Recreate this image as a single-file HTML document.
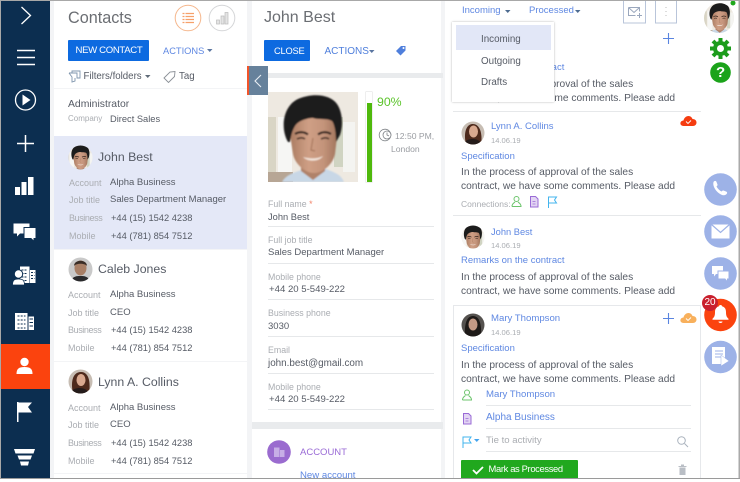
<!DOCTYPE html>
<html><head><meta charset="utf-8"><style>
html,body{margin:0;padding:0}
body{width:740px;height:479px;overflow:hidden;position:relative;background:#fff;font-family:"Liberation Sans",sans-serif;color:#565b65;font-size:9.5px}
i{font-style:normal;position:absolute;white-space:nowrap;line-height:12px;transform:translateY(1px)}
.b{position:absolute}
.l{color:#aaadb2;font-size:9px}
.bz{letter-spacing:-.4px}
.n{font-size:12.300px;color:#565b65}
.a{color:#5f88e2;font-size:9.500px}
.f{color:#aaadb2;font-size:8.800px}
.p{font-size:9.300px}
.m{font-size:10.200px}
.d{font-size:7.600px;color:#aaadb2}
.ln{position:absolute;height:1px;background:#e6e8ea}
svg{position:absolute;overflow:hidden}
</style></head><body>
<div class="b" style="left:50px;top:0;width:690px;height:479px;background:#f3f4f6"></div>
<div class="b" style="left:54px;top:0;width:193px;height:88px;background:#fff"></div>
<div class="b" style="left:54px;top:89px;width:193px;height:47px;background:#fff"></div>
<div class="b" style="left:54px;top:136px;width:193px;height:113px;background:#e4e8f7"></div>
<div class="b" style="left:54px;top:250px;width:193px;height:111px;background:#fff"></div>
<div class="b" style="left:54px;top:362px;width:193px;height:111px;background:#fff"></div>
<div class="b" style="left:54px;top:474px;width:193px;height:5px;background:#fff"></div>
<div class="b" style="left:252px;top:0;width:189px;height:73px;background:#fff"></div>
<div class="b" style="left:252px;top:73px;width:191px;height:5px;background:#e9ebed"></div>
<div class="b" style="left:252px;top:78px;width:189px;height:344px;background:#fff"></div>
<div class="b" style="left:252px;top:422px;width:191px;height:7px;background:#e9ebed"></div>
<div class="b" style="left:252px;top:429px;width:189px;height:50px;background:#fff"></div>
<div class="b" style="left:445px;top:0;width:295px;height:479px;background:#fff"></div>

<!-- sidebar -->
<div class="b" style="left:1px;top:0;width:49px;height:479px;background:#0c2e50"></div>
<div class="b" style="left:1px;top:344px;width:49px;height:45px;background:#fb430e"></div>
<svg style="left:0;top:0" width="50" height="479" fill="#fff">
<path d="M21.500 7l9 8.500-9 8.500" fill="none" stroke="#fff" stroke-width="1.300"/>
<path d="M17 50.500h18M17 57.500h18M17 64.500h18" stroke="#fff" stroke-width="1.600"/>
<circle cx="25.500" cy="100" r="10" fill="none" stroke="#fff" stroke-width="1.300"/><path d="M22.500 94.500l8 5.500-8 5.500z"/>
<path d="M25.500 135v17M17 143.500h17" stroke="#fff" stroke-width="1.500"/>
<path d="M15 187h5v8h-5zM21.500 182h5v13h-5zM28 177h5.500v18H28z"/>
<path d="M13.500 223.500h16v10h-9.500l-3 3v-3h-3.500z"/><path d="M24 227.500h12v11h-2v3l-3-3H24z" stroke="#0c2e50"/>
<path d="M20 268v-1.500h9.500V283H20zM30 270h5.500v13H30z"/>
<path d="M21.500 270h6M21.500 273.500h6M21.500 277h6M21.500 280.500h6M31 272.500h3.500M31 275.500h3.500M31 278.500h3.500" stroke="#0c2e50" stroke-dasharray="2 1"/>
<circle cx="18.500" cy="274" r="4.200" stroke="#0c2e50"/><path d="M12.500 285c0-5.500 2.500-6 6-6s6 .5 6 6z" stroke="#0c2e50" stroke-width=".8"/>
<path d="M15 313h12.500v17H15zM28.500 316.500h5.500V330h-5.500z"/><path d="M17.500 316h8M17.500 320h8M17.500 324h8M17.500 328h8" stroke="#0c2e50" stroke-dasharray="2 1.200"/><path d="M29.500 319h3.500M29.500 322.500h3.500M29.500 326h3.500" stroke="#0c2e50"/>
<circle cx="24.500" cy="362" r="4.200"/><path d="M16.500 374c0-5.500 2.500-7 8-7s8 1.500 8 7z"/>
<path d="M17 402h1.500v20H17zM18.500 402.500H32l-4 4.500 4 5.500H18.500z"/>
<path d="M14 449h21l-1.500 4.500h-18zM17.500 455.500h14.500l-1.500 4h-11.500zM20 461.500h9l-1 4h-7z"/>
</svg>

<!-- contacts column -->
<i style="left:68px;top:9px;font-size:16.200px;line-height:16px;color:#6b6e73">Contacts</i>
<svg style="left:172px;top:3px" width="66" height="30">
<circle cx="16" cy="15" r="12.800" fill="#fff" stroke="#f5b78d" stroke-width="1"/>
<path d="M10.500 10.500h2M13.500 10.500h8.500M10.500 13.500h2M13.500 13.500h8.500M10.500 16.500h2M13.500 16.500h8.500M10.500 19.500h2M13.500 19.500h8.500" stroke="#f6a06a" stroke-width="1.300"/>
<circle cx="50" cy="15" r="12.800" fill="#fff" stroke="#d5d6d8" stroke-width="1"/>
<path d="M44.500 17h3v4h-3zM49 13h3v8h-3zM53 9.500h3v11.500h-3z" fill="#e4e4e4" stroke="#bdbdbd" stroke-width=".7"/>
</svg>
<div class="b" style="left:68px;top:40px;width:81px;height:21px;background:#0d6ae0;border-radius:1px"></div>
<i style="left:75.500px;top:44px;color:#fff;font-size:9.600px;letter-spacing:-.35px">NEW CONTACT</i>
<i class="a" style="left:163px;top:44px;font-size:9.300px">ACTIONS</i>
<svg style="left:207px;top:49px" width="7" height="5"><path d="M0 0h5.500l-2.750 3z" fill="#5a75a0"/></svg>
<svg style="left:67px;top:69px" width="112" height="16" fill="none" stroke="#7f95ad" stroke-width=".9">
<path d="M2 4h8v5h3V2H5v2M2 4l3 4v5l3-1V9"/>
<path d="M97 9l6-6 5-.5-.5 5-6 6z" stroke="#8a8f96"/>
</svg>
<i style="left:83.500px;top:70px;font-size:9.700px">Filters/folders</i>
<svg style="left:145px;top:75px" width="7" height="5"><path d="M0 0h5.500l-2.750 3z" fill="#5f6b78"/></svg>
<i style="left:179px;top:70px;font-size:9.700px">Tag</i>

<i style="left:68px;top:98px;font-size:10.400px">Administrator</i>
<i class="l" style="left:68px;top:112px;font-size:8px">Company</i>
<i style="left:110px;top:112px;font-size:9.300px">Direct Sales</i>

<!-- photo symbol -->
<svg width="0" height="0" style="left:0;top:0"><defs>
<filter id="bl"><feGaussianBlur stdDeviation=".9"/></filter>
<linearGradient id="sk" x1="0" x2="1" y1="0" y2="0"><stop offset="0" stop-color="#a87a60"/><stop offset=".4" stop-color="#cf9f85"/><stop offset=".7" stop-color="#c4947b"/><stop offset="1" stop-color="#9f735a"/></linearGradient>
<g id="face"><rect width="90" height="90" fill="#eee9e1"/>
<rect x="0" y="25" width="8" height="55" fill="#d9d5c5"/><rect x="10" y="25" width="14" height="55" fill="#f6f6f4"/><rect x="66" y="25" width="9" height="50" fill="#d0d4c2"/><rect x="75" y="30" width="12" height="50" fill="#f4f4f1"/>
<rect x="0" y="80" width="25" height="10" fill="#b7a695"/>
<g filter="url(#bl)">
<path d="M14 90c5-9 16-10 22-13h22c7 3 15 5 18 13z" fill="#c8d7e6"/>
<path d="M33 68h24v11l-12 9-12-9z" fill="#b08269"/>
<path d="M21 36c0-12 11-18 25-18s25 6 24 18l-3 26c-2 10-12 19-21 19s-19-9-21-19z" fill="url(#sk)"/>
<path d="M20 50C12 36 15 14 30 7c14-6 32-5 39 5 6 9 6 22 3 31l-4 7c0-8-1-17-4-21-5-3-13-1-19-3-6 0-15 3-18 8-3 5-4 10-5 16z" fill="#1e1a1a"/>
<path d="M27 42c4-2.500 9-2.500 13 .5M50 42.500c4-3 9-3 13-.5" stroke="#33241d" stroke-width="2.200" fill="none"/>
<path d="M29 47c3-1.500 6-1.500 8 0M53 47c3-1.500 6-1.500 8 0" stroke="#3f2c23" stroke-width="1.700" fill="none"/>
<path d="M45 46l-2 12 4 1" stroke="#a9795f" stroke-width="1.200" fill="none"/>
<path d="M35 65c7 2 14 2 20-1-4 6-15 6-20 1z" fill="#f2e4da"/>
</g></g></defs></svg>

<svg style="left:68px;top:145px" width="25" height="25" viewBox="0 0 25 25"><clipPath id="c1"><circle cx="12.500" cy="12.500" r="12"/></clipPath><g clip-path="url(#c1)"><use href="#face" transform="translate(-1.500 -1) scale(.31)"/></g></svg>
<i class="n" style="left:98px;top:150px">John Best</i>
<i class="l" style="left:69px;top:176px">Account</i><i style="left:110px;top:176px">Alpha Business</i>
<i class="l" style="left:69px;top:193px">Job title</i><i style="left:110px;top:193px">Sales Department Manager</i>
<i class="l bz" style="left:69px;top:211px">Business</i><i class="p" style="left:111px;top:211px">+44 (15) 1542 4238</i>
<i class="l" style="left:69px;top:229px">Mobile</i><i class="p" style="left:111px;top:229px">+44 (781) 854 7512</i>

<svg style="left:68px;top:257px" width="25" height="25"><clipPath id="c2"><circle cx="12.500" cy="12.500" r="12"/></clipPath><g clip-path="url(#c2)"><rect width="25" height="25" fill="#c9c9c9"/><ellipse cx="12.500" cy="11" rx="6" ry="7.500" fill="#a87f66"/><path d="M6 9c0-7 13-7 13 0-2-3-11-3-13 0z" fill="#3a2d26"/><path d="M3 25c1-6 6-6 9.500-6s8 0 9.500 6z" fill="#2a2a2c"/></g></svg>
<i class="n" style="left:98px;top:262px">Caleb Jones</i>
<i class="l" style="left:68px;top:288px">Account</i><i style="left:110px;top:288px">Alpha Business</i>
<i class="l" style="left:68px;top:306px">Job title</i><i style="left:110px;top:306px">CEO</i>
<i class="l bz" style="left:68px;top:323px">Business</i><i class="p" style="left:111px;top:323px">+44 (15) 1542 4238</i>
<i class="l" style="left:68px;top:341px">Mobile</i><i class="p" style="left:111px;top:341px">+44 (781) 854 7512</i>

<svg style="left:68px;top:369px" width="25" height="25"><clipPath id="c3"><circle cx="12.500" cy="12.500" r="12"/></clipPath><g clip-path="url(#c3)"><rect width="25" height="25" fill="#c7bdb3"/><path d="M5 25C2 10 6 3 13 3s10 8 8 22z" fill="#4e2a1c"/><ellipse cx="13" cy="11" rx="4.500" ry="6" fill="#d9a98f"/><path d="M2 25c2-5 6-6 10-6s8 2 9 6z" fill="#241b1a"/></g></svg>
<i class="n" style="left:98px;top:375px">Lynn A. Collins</i>
<i class="l" style="left:68px;top:401px">Account</i><i style="left:110px;top:401px">Alpha Business</i>
<i class="l" style="left:68px;top:418px">Job title</i><i style="left:110px;top:418px">CEO</i>
<i class="l bz" style="left:68px;top:436px">Business</i><i class="p" style="left:111px;top:436px">+44 (15) 1542 4238</i>
<i class="l" style="left:68px;top:454px">Mobile</i><i class="p" style="left:111px;top:454px">+44 (781) 854 7512</i>

<!-- detail column -->
<i style="left:264px;top:8.500px;font-size:16px;line-height:16px;color:#6b6e73">John Best</i>
<div class="b" style="left:264px;top:40px;width:46px;height:21px;background:#0d6ae0;border-radius:1px"></div>
<i style="left:274px;top:44px;color:#fff;font-size:9.300px;letter-spacing:-.2px">CLOSE</i>
<i class="a" style="left:324.500px;top:44.500px;font-size:10px;color:#4f7fdc">ACTIONS</i>
<svg style="left:369px;top:50px" width="6" height="4"><path d="M0 0h5.500l-2.750 3z" fill="#5a75a0"/></svg>
<svg style="left:395px;top:45px" width="12" height="12"><path d="M1 6l5-5h4.500v4.500l-5 5z" fill="#4f7fdc"/><circle cx="8.500" cy="3" r="1" fill="#fff"/></svg>
<div class="b" style="left:247px;top:66px;width:21px;height:29px;background:#66819b"></div>
<div class="b" style="left:247px;top:66px;width:2px;height:29px;background:#f2542a"></div>
<svg style="left:252px;top:72px" width="12" height="18"><path d="M9 3L3 9l6 6" fill="none" stroke="#e8edf2" stroke-width="1.100"/></svg>

<svg style="left:268px;top:92px" width="90" height="90"><use href="#face"/></svg>
<div class="b" style="left:366px;top:92px;width:6px;height:90px;background:#fff;box-shadow:0 0 0 .5px #ddd"></div>
<div class="b" style="left:367px;top:103px;width:5px;height:79px;background:#4fb90c"></div>
<i style="left:377px;top:95px;font-size:12.300px;line-height:13px;color:#5cc42c">90%</i>
<svg style="left:378px;top:128px" width="15" height="15" fill="none" stroke="#7c8085" stroke-width=".8"><circle cx="7" cy="7" r="5.800"/><circle cx="9" cy="7" r="4" fill="#fff"/><path d="M9 4.500V7l2 1"/></svg>
<i style="left:395px;top:129px;font-size:8.600px;color:#9a9da2">12:50 PM,</i>
<i style="left:391px;top:142px;font-size:8.600px;color:#9a9da2">London</i>

<i class="f" style="left:268px;top:197px">Full name <span style="color:#f2846a">*</span></i>
<i style="left:268px;top:210px;font-size:9.300px">John Best</i><div class="ln" style="left:268px;top:226px;width:166px"></div>
<i class="f" style="left:268px;top:233px">Full job title</i>
<i style="left:268px;top:246px">Sales Department Manager</i><div class="ln" style="left:268px;top:263px;width:166px"></div>
<i class="f" style="left:268px;top:270px">Mobile phone</i>
<i style="left:269px;top:283px;font-size:9.600px">+44 20 5-549-222</i><div class="ln" style="left:268px;top:299px;width:166px"></div>
<i class="f" style="left:268px;top:306px">Business phone</i>
<i style="left:268px;top:320px">3030</i><div class="ln" style="left:268px;top:336px;width:166px"></div>
<i class="f" style="left:268px;top:343px">Email</i>
<i style="left:268px;top:357px;font-size:9.900px">john.best@gmail.com</i><div class="ln" style="left:268px;top:373px;width:166px"></div>
<i class="f" style="left:268px;top:380px">Mobile phone</i>
<i style="left:269px;top:393px;font-size:9.600px">+44 20 5-549-222</i><div class="ln" style="left:268px;top:409px;width:166px"></div>
<svg style="left:267px;top:440px" width="24" height="24"><circle cx="12" cy="12" r="11.800" fill="#9a6bcf"/><path d="M7 7.500h5.500V17H7zM13 10h4.500v7H13z" fill="#c7aee6"/></svg>
<i style="left:300px;top:446px;color:#9a6bd6">ACCOUNT</i>
<i class="a" style="left:300px;top:469px;font-size:9.600px">New account</i>

<!-- right column -->
<i class="a" style="left:462px;top:4px">Incoming</i>
<svg style="left:505px;top:10px" width="6" height="4"><path d="M0 0h5.500l-2.750 3z" fill="#4d6b90"/></svg>
<i class="a" style="left:529px;top:4px">Processed</i>
<svg style="left:575px;top:10px" width="6" height="4"><path d="M0 0h5.500l-2.750 3z" fill="#4d6b90"/></svg>
<svg style="left:623px;top:0" width="56" height="24" fill="none" stroke="#b9c5da" stroke-width="1"><rect x=".5" y=".5" width="22" height="22.500"/><rect x="32.500" y=".5" width="21" height="22.500"/><path d="M5.500 7.500h11v4M5.500 7.500v8h7M5.500 7.500l5.500 5 5.500-5M14 15.500h5M16.500 13v5" stroke="#9aa7bd"/><path d="M43 7v1M43 11v1M43 15v1" stroke="#bbb"/></svg>
<svg style="left:662px;top:32px" width="13" height="13"><path d="M6.500 1v11M1 6.500h11" stroke="#5a85e0" stroke-width="1.100"/></svg>

<i class="a" style="left:548.500px;top:61px">ract</i>
<i class="m" style="left:461px;top:78px">In the process of approval of the sales</i>
<i class="m" style="left:461px;top:92px">contract, we have some comments. Please add</i>
<div class="ln" style="left:453px;top:111px;width:248px"></div>

<!-- dropdown -->
<div class="b" style="left:452px;top:22px;width:102px;height:80px;background:#fff;box-shadow:0 0 2px rgba(0,0,0,.3)"></div>
<div class="b" style="left:456px;top:25px;width:95px;height:25px;background:#e2e7f7"></div>
<i style="left:481px;top:33px;font-size:9.800px">Incoming</i>
<i style="left:481px;top:55px;font-size:9.800px">Outgoing</i>
<i style="left:481px;top:76px;font-size:9.800px">Drafts</i>

<svg style="left:461px;top:121px" width="24" height="24"><clipPath id="c4"><circle cx="12" cy="12" r="11.500"/></clipPath><g clip-path="url(#c4)"><rect width="24" height="24" fill="#c7bdb3"/><path d="M5 24C2 10 6 3 12 3s10 8 8 21z" fill="#4e2a1c"/><ellipse cx="12.500" cy="10.500" rx="4.500" ry="6" fill="#d9a98f"/><path d="M2 24c2-5 6-6 10-6s8 2 9 6z" fill="#241b1a"/></g></svg>
<i class="a" style="left:491px;top:120px">Lynn A. Collins</i>
<i class="d" style="left:491px;top:134px">14.06.19</i>
<svg style="left:680px;top:115px" width="17" height="12"><path d="M3.500 11C1 11 0 9 .5 7.500 1 6 2.500 5.500 3.500 5.500 4 3 6 1 8.500 1c2 0 3.500 1.500 4 3 2.500 0 4 1.500 4 3.500S15 11 13 11z" fill="#f53c10"/><path d="M6 6.500l2 2 3-3" stroke="#fff" stroke-width=".9" fill="none"/></svg>
<i class="a" style="left:461px;top:150px">Specification</i>
<i class="m" style="left:461px;top:166px">In the process of approval of the sales</i>
<i class="m" style="left:461px;top:180px">contract, we have some comments. Please add</i>
<i class="l" style="left:461px;top:197px;font-size:8.500px">Connections:</i>
<svg style="left:510px;top:195px" width="60" height="14" fill="none"><circle cx="6.500" cy="4" r="2.500" stroke="#6dc56d"/><path d="M2 11.500h9c0-3-2-3.500-3-4.500M5 7c-1 1-3 1.500-3 4.500" stroke="#6dc56d"/><path d="M20.500 1.500h5l2.500 2.500v8h-7.500z" fill="#e3d5f3" stroke="#9a6bd6"/><path d="M22.500 6.500h3M22.500 9h3" stroke="#9a6bd6" stroke-width=".8"/><path d="M38.500 13V2h8l-2 3 2 3h-8" stroke="#43b4ee"/></svg>
<div class="ln" style="left:453px;top:215px;width:248px"></div>

<svg style="left:461px;top:225px" width="24" height="24"><clipPath id="c5"><circle cx="12" cy="12" r="11.500"/></clipPath><g clip-path="url(#c5)"><use href="#face" transform="translate(-2 -1) scale(.31)"/></g></svg>
<i class="a" style="left:491px;top:225px;font-size:9.300px">John Best</i>
<i class="d" style="left:491px;top:239px">14.06.19</i>
<i class="a" style="left:461px;top:254px">Remarks on the contract</i>
<i class="m" style="left:461px;top:271px">In the process of approval of the sales</i>
<i class="m" style="left:461px;top:285px">contract, we have some comments. Please add</i>

<div class="b" style="left:453px;top:305px;width:248px;height:174px;box-sizing:border-box;border:1px solid #e6e8eb;border-bottom:0"></div>
<svg style="left:461px;top:313px" width="24" height="24"><clipPath id="c6"><circle cx="12" cy="12" r="11.500"/></clipPath><g clip-path="url(#c6)"><rect width="24" height="24" fill="#55524f"/><path d="M4 24C3 8 7 3 12 3s9 5 8 21z" fill="#1e1a18"/><ellipse cx="12" cy="11.500" rx="4.500" ry="6" fill="#c49a85"/></g></svg>
<i class="a" style="left:491px;top:312px;font-size:9.600px">Mary Thompson</i>
<i class="d" style="left:491px;top:326px">14.06.19</i>
<svg style="left:662px;top:312px" width="13" height="13"><path d="M6.500 1v11M1 6.500h11" stroke="#5a85e0" stroke-width="1.100"/></svg>
<svg style="left:680px;top:312px" width="17" height="12"><path d="M3.500 11C1 11 0 9 .5 7.500 1 6 2.500 5.500 3.500 5.500 4 3 6 1 8.500 1c2 0 3.500 1.500 4 3 2.500 0 4 1.500 4 3.500S15 11 13 11z" fill="#f8b05c"/><path d="M6 6.500l2 2 3-3" stroke="#fff" stroke-width=".9" fill="none"/></svg>
<i class="a" style="left:461px;top:342px">Specification</i>
<i class="m" style="left:461px;top:359px">In the process of approval of the sales</i>
<i class="m" style="left:461px;top:373px">contract, we have some comments. Please add</i>
<svg style="left:461px;top:388px" width="36" height="66" fill="none"><circle cx="6" cy="4.500" r="2.500" stroke="#6dc56d"/><path d="M1.500 12h9c0-3-2-3.500-3-4.500M4.500 7.500c-1 1-3 1.500-3 4.500" stroke="#6dc56d"/><path d="M2.500 25.500h5L10 28v8H2.500z" fill="#e3d5f3" stroke="#9a6bd6"/><path d="M4.500 30.500h3M4.500 33h3" stroke="#9a6bd6" stroke-width=".8"/><path d="M2 60V49h8l-2 3 2 3H2" stroke="#43b4ee"/><path d="M13 51h5.500l-2.750 3z" fill="#43a4ee"/></svg>
<i class="a" style="left:486px;top:388px;font-size:9.600px">Mary Thompson</i><div class="ln" style="left:486px;top:405px;width:205px"></div>
<i class="a" style="left:486px;top:411px;font-size:10px">Alpha Business</i><div class="ln" style="left:486px;top:428px;width:205px"></div>
<i class="l" style="left:486px;top:434px;font-size:9.600px">Tie to activity</i><div class="ln" style="left:486px;top:451px;width:205px"></div>
<svg style="left:676px;top:435px" width="14" height="14" fill="none" stroke="#a9b2bd"><circle cx="5.500" cy="5.500" r="3.800"/><path d="M8.500 8.500l3.500 3.500"/></svg>
<div class="b" style="left:461px;top:460px;width:117px;height:19px;background:#21a81e;border-radius:1px"></div>
<svg style="left:472px;top:464px" width="13" height="12"><path d="M1 6l3.500 3.500L11 3" fill="none" stroke="#fff" stroke-width="1.800"/></svg>
<i style="left:488.500px;top:462px;color:#fff;font-size:9.400px;letter-spacing:-.35px">Mark as Processed</i>
<svg style="left:677px;top:463px" width="12" height="13" fill="#b9bec5"><path d="M1.500 3h8v1h-8zM4 1.500h3V3H4zM2.500 4.500h6V12h-6z"/></svg>

<!-- right rail -->
<svg style="left:702px;top:0" width="38" height="479">
<clipPath id="c7"><circle cx="17" cy="18" r="15"/></clipPath><g clip-path="url(#c7)"><use href="#face" transform="translate(2 2) scale(.35)"/></g>
<circle cx="31" cy="3" r="2.500" fill="#1fa81d"/>
<circle cx="18.500" cy="48.500" r="7.500" fill="#1b9c1b"/>
<path d="M18.500 38v21M8 48.500h21M11 41l15 15M26 41L11 56" stroke="#1b9c1b" stroke-width="4"/>
<circle cx="18.500" cy="48.500" r="3.500" fill="#fff"/>
<circle cx="18.500" cy="72.500" r="10.300" fill="#1ba31a"/>
<circle cx="18.500" cy="189.500" r="16.300" fill="#9db2e7"/>
<path d="M11.500 182c1-1.500 2.500-1.500 3 0l1 2.500c.3 1-.7 1.500-1 2 1 2 3 4 5 5 .5-.3 1-1.300 2-1l2.500 1c1.500.5 1.500 2 0 3-2 1.500-5 .7-8-2s-5.500-7-4.500-10.500z" fill="#fff"/>
<circle cx="18.500" cy="231.500" r="16.300" fill="#9db2e7"/>
<rect x="9.500" y="224.500" width="18" height="14" fill="#fff"/><path d="M9.500 224.500l9 8 9-8" fill="none" stroke="#9db2e7" stroke-width="1.200"/>
<circle cx="18.500" cy="273.500" r="16.300" fill="#9db2e7"/>
<path d="M10 266h11v8h-7l-2 2.500V274h-2z" fill="#fff"/><path d="M16 271h11v8h-1.500v3l-2.500-3h-7z" fill="#fff" stroke="#9db2e7"/>
<circle cx="18.500" cy="315" r="16.300" fill="#fb430e"/>
<path d="M18.500 305c1 0 1.500.5 1.500 1.200 3 .8 4 3 4 6 0 4 1 5 2.500 6.500v1h-16v-1c1.500-1.500 2.500-2.500 2.500-6.500 0-3 1-5.200 4-6 0-.7.5-1.200 1.500-1.200z" fill="#fff"/><path d="M16.500 321.500h4c0 2-4 2-4 0z" fill="#fff"/>
<circle cx="8" cy="303" r="8" fill="#c9202e"/>
<circle cx="18.500" cy="357" r="16.300" fill="#9db2e7"/>
<path d="M10 347h13v12l-4 5h-9z" fill="#fff"/><path d="M19 355l8 6-8 5z" fill="#fff" stroke="#9db2e7" stroke-width=".5"/><path d="M13 351h8M13 354h8M13 357h6" stroke="#9db2e7"/>
<rect x="36.500" y="0" width="1.500" height="479" fill="#aaa"/>
</svg>
<i style="left:716px;top:65px;font-size:15px;line-height:13px;color:#fff;font-weight:bold;width:9px;text-align:center">?</i>
<i style="left:702px;top:296px;width:16px;text-align:center;color:#fff;font-size:10px">20</i>
<div class="b" style="left:0;top:0;width:740px;height:1px;background:#a8a8a8"></div>
<div class="b" style="left:0;top:0;width:1px;height:479px;background:#a8a8a8"></div>
<div class="b" style="left:0;top:478px;width:740px;height:1px;background:#9a9a9a"></div>
</body></html>
